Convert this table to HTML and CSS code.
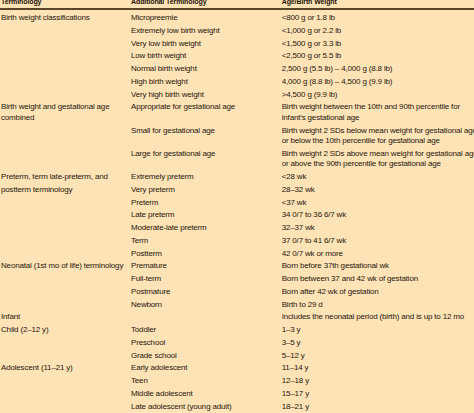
FILE: index.html
```html
<!DOCTYPE html>
<html>
<head>
<meta charset="utf-8">
<link rel="stylesheet" href="styles.css">
</head>
<body>
<table class="terms">
  <colgroup><col class="c1"><col class="c2"><col class="c3"></colgroup>
  <thead>
    <tr><th>Terminology</th><th>Additional Terminology</th><th>Age/Birth Weight</th></tr>
  </thead>
  <tbody>
    <tr class="first"><td>Birth weight classifications</td><td>Micropreemie</td><td>&lt;800 g or 1.8 lb</td></tr>
    <tr><td></td><td>Extremely low birth weight</td><td>&lt;1,000 g or 2.2 lb</td></tr>
    <tr><td></td><td>Very low birth weight</td><td>&lt;1,500 g or 3.3 lb</td></tr>
    <tr><td></td><td>Low birth weight</td><td>&lt;2,500 g or 5.5 lb</td></tr>
    <tr><td></td><td>Normal birth weight</td><td>2,500 g (5.5 lb) – 4,000 g (8.8 lb)</td></tr>
    <tr><td></td><td>High birth weight</td><td>4,000 g (8.8 lb) – 4,500 g (9.9 lb)</td></tr>
    <tr><td></td><td>Very high birth weight</td><td>&gt;4,500 g (9.9 lb)</td></tr>
    <tr><td>Birth weight and gestational age<br>combined</td><td>Appropriate for gestational age</td><td>Birth weight between the 10th and 90th percentile for<br>infant’s gestational age</td></tr>
    <tr><td></td><td>Small for gestational age</td><td>Birth weight 2 SDs below mean weight for gestational age<br>or below the 10th percentile for gestational age</td></tr>
    <tr><td></td><td>Large for gestational age</td><td>Birth weight 2 SDs above mean weight for gestational age<br>or above the 90th percentile for gestational age</td></tr>
    <tr><td>Preterm, term late-preterm, and</td><td>Extremely preterm</td><td>&lt;28 wk</td></tr>
    <tr><td>postterm terminology</td><td>Very preterm</td><td>28–32 wk</td></tr>
    <tr><td></td><td>Preterm</td><td>&lt;37 wk</td></tr>
    <tr><td></td><td>Late preterm</td><td>34 0/7 to 36 6/7 wk</td></tr>
    <tr><td></td><td>Moderate-late preterm</td><td>32–37 wk</td></tr>
    <tr><td></td><td>Term</td><td>37 0/7 to 41 6/7 wk</td></tr>
    <tr><td></td><td>Postterm</td><td>42 0/7 wk or more</td></tr>
    <tr><td>Neonatal (1st mo of life) terminology</td><td>Premature</td><td>Born before 37th gestational wk</td></tr>
    <tr><td></td><td>Full-term</td><td>Born between 37 and 42 wk of gestation</td></tr>
    <tr><td></td><td>Postmature</td><td>Born after 42 wk of gestation</td></tr>
    <tr><td></td><td>Newborn</td><td>Birth to 29 d</td></tr>
    <tr><td>Infant</td><td></td><td>Includes the neonatal period (birth) and is up to 12 mo</td></tr>
    <tr><td>Child (2–12 y)</td><td>Toddler</td><td>1–3 y</td></tr>
    <tr><td></td><td>Preschool</td><td>3–5 y</td></tr>
    <tr><td></td><td>Grade school</td><td>5–12 y</td></tr>
    <tr><td>Adolescent (11–21 y)</td><td>Early adolescent</td><td>11–14 y</td></tr>
    <tr><td></td><td>Teen</td><td>12–18 y</td></tr>
    <tr><td></td><td>Middle adolescent</td><td>15–17 y</td></tr>
    <tr><td></td><td>Late adolescent (young adult)</td><td>18–21 y</td></tr>
  </tbody>
</table>
</body>
</html>
```
FILE: styles.css
```css
html, body {
  margin: 0;
  padding: 0;
  background: #fee3b6;
  overflow: hidden;
  height: 100%;
}
.terms {
  margin-top: -3px;
  width: 474px;
  table-layout: fixed;
  border-collapse: collapse;
  border-spacing: 0;
  font-family: "Liberation Sans", Arial, sans-serif;
  font-size: 8px;
  letter-spacing: -0.17px;
  color: #1f170c;
}
.c1 { width: 131px; }
.c2 { width: 150.7px; }
.terms th {
  font-family: "Liberation Sans Narrow", "Liberation Sans", Arial, sans-serif;
  font-weight: bold;
  font-size: 7px;
  letter-spacing: -0.1px;
  text-align: left;
  line-height: 10.5px;
  padding: 0;
  color: #1c1309;
  border-bottom: 2px solid #5a4428;
}
.terms td {
  padding: 1.125px 0;
  line-height: 10.5px;
  vertical-align: top;
  white-space: nowrap;
  overflow: hidden;
}
.terms td:first-child,
.terms th:first-child { padding-left: 1px; }
.terms tr.first td { padding-top: 3.5px; }
```
